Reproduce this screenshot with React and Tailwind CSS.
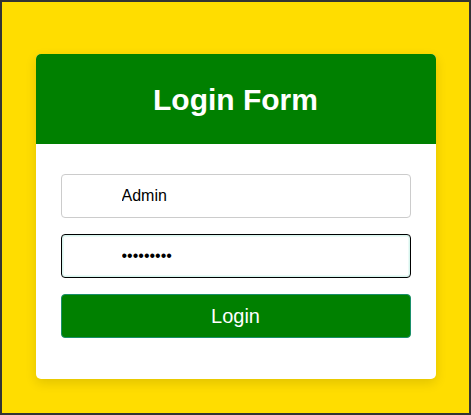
export default function App() {
  return (
    <div
      className="h-screen w-full border-2 border-[#333333] bg-[#FFDD00] pt-[52px]"
      style={{ fontFamily: '"Liberation Sans", Arial, sans-serif' }}
    >
      {/* Card */}
      <div className="mx-auto w-[400px] overflow-hidden rounded-[5px] bg-white shadow-[0_4px_12px_rgba(0,0,0,0.12)]">
        <div className="flex h-[90px] items-center justify-center bg-[#008000]">
          <h1 className="text-[30px] font-bold text-white">Login Form</h1>
        </div>

        <div className="flex flex-col gap-4 px-[25px] pt-[30px] pb-[41px]">
          <input
            className="h-[44px] w-full rounded-[4px] border border-[#cccccc] bg-white pl-[60px] text-[16px] text-black outline-none"
            defaultValue="Admin"
          />
          <input
            type="password"
            className="h-[44px] w-full rounded-[4px] border-[1.5px] border-black bg-white pl-[60px] text-[16px] text-black outline-none shadow-[inset_0_0_0_1.5px_#d8f5ee]"
            defaultValue="password1"
          />
          <button className="h-[44px] w-full rounded-[4px] border border-[#1a8f6a] bg-[#008000] text-[20px] text-white">
            Login
          </button>
        </div>
      </div>
    </div>
  );
}
